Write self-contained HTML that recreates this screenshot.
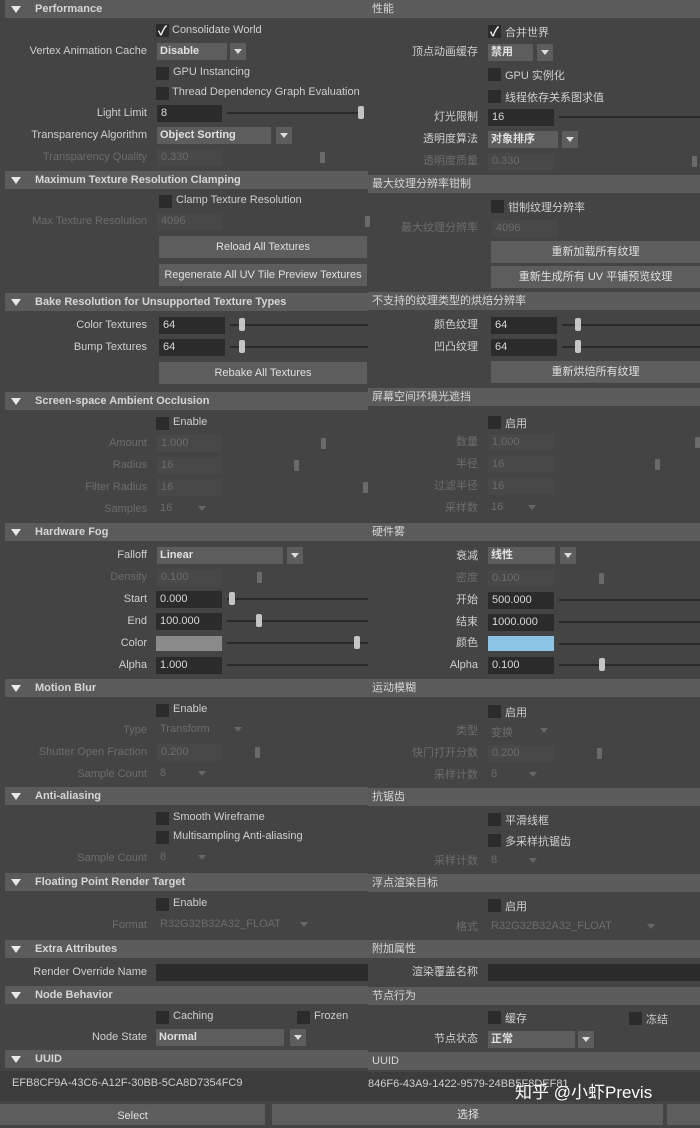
<!DOCTYPE html>
<html><head><meta charset="utf-8"><style>
*{margin:0;padding:0;box-sizing:border-box}
body{width:700px;height:1125px;background:#444;position:relative;overflow:hidden;font-family:"Liberation Sans","Noto Sans CJK SC",sans-serif;font-size:11px;color:#cfcfcf}
div,span{position:absolute;white-space:nowrap}
.h{height:18px;background:#5b5b5b;color:#d6d6d6;font-weight:bold;line-height:18px}
.hl{left:5px;width:363px;padding-left:30px}
.hr{left:368px;width:332px;padding-left:4px;font-weight:normal}
.tri{left:6px;top:6px;width:0;height:0;border-left:5px solid transparent;border-right:5px solid transparent;border-top:7px solid #e8e8e8}
.lb{text-align:right;line-height:14px}
.L{right:553px}.R{right:222px}
.d{color:#6c6c6c}
.cb{width:13px;height:13px;background:#2b2b2b}
.ck{color:#f0f0f0;font-size:13px;line-height:13px;text-align:center;font-weight:bold}
.f{height:17px;background:#2b2b2b;line-height:17px;padding-left:4px;color:#d8d8d8}
.fd{height:17px;background:#484848;line-height:17px;padding-left:4px;color:#6c6c6c}
.dd{height:17px;background:#5d5d5d;line-height:17px;padding-left:3px;color:#e0e0e0;font-weight:bold}
.ar{width:16px;height:17px;background:#5d5d5d}
.ar:after{content:"";position:absolute;left:4px;top:6px;border-left:4px solid transparent;border-right:4px solid transparent;border-top:5px solid #ddd}
.ard{width:12px;height:17px}
.ard:after{content:"";position:absolute;left:2px;top:6px;border-left:4px solid transparent;border-right:4px solid transparent;border-top:5px solid #666}
.sl{height:2px;background:#2a2a2a}
.k{width:6px;height:13px;background:#c4c4c4;border-radius:2px}
.kd{width:5px;height:11px;background:#6a6a6a;border-radius:1px}
.bt{height:22px;background:#5d5d5d;text-align:center;line-height:22px;color:#e0e0e0}
</style></head><body>

<!-- LEFT -->
<div class="h hl" style="top:0"><span class="tri"></span>Performance</div>
<div class="cb ck" style="left:156px;top:24px">✓</div><div style="left:172px;top:24px">Consolidate World</div>
<div class="lb L" style="top:44px">Vertex Animation Cache</div><div class="dd" style="left:157px;top:43px;width:70px">Disable</div><div class="ar" style="left:230px;top:43px"></div>
<div class="cb" style="left:156px;top:67px"></div><div style="left:173px;top:66px">GPU Instancing</div>
<div class="cb" style="left:156px;top:87px"></div><div style="left:172px;top:86px">Thread Dependency Graph Evaluation</div>
<div class="lb L" style="top:106px">Light Limit</div><div class="f" style="left:157px;top:105px;width:65px">8</div><div class="sl" style="left:227px;top:112px;width:137px"></div><div class="k" style="left:358px;top:106px"></div>
<div class="lb L" style="top:128px">Transparency Algorithm</div><div class="dd" style="left:157px;top:127px;width:114px">Object Sorting</div><div class="ar" style="left:276px;top:127px"></div>
<div class="lb L d" style="top:150px">Transparency Quality</div><div class="fd" style="left:157px;top:149px;width:65px">0.330</div><div class="kd" style="left:320px;top:152px"></div>
<div class="h hl" style="top:171px"><span class="tri"></span>Maximum Texture Resolution Clamping</div>
<div class="cb" style="left:159px;top:195px"></div><div style="left:176px;top:194px">Clamp Texture Resolution</div>
<div class="lb L d" style="top:214px">Max Texture Resolution</div><div class="fd" style="left:157px;top:213px;width:65px">4096</div><div class="kd" style="left:365px;top:216px"></div>
<div class="bt" style="left:159px;top:236px;width:208px">Reload All Textures</div>
<div class="bt" style="left:159px;top:264px;width:208px">Regenerate All UV Tile Preview Textures</div>
<div class="h hl" style="top:293px"><span class="tri"></span>Bake Resolution for Unsupported Texture Types</div>
<div class="lb L" style="top:318px">Color Textures</div><div class="f" style="left:159px;top:317px;width:66px">64</div><div class="sl" style="left:230px;top:324px;width:138px"></div><div class="k" style="left:239px;top:318px"></div>
<div class="lb L" style="top:340px">Bump Textures</div><div class="f" style="left:159px;top:339px;width:66px">64</div><div class="sl" style="left:230px;top:346px;width:138px"></div><div class="k" style="left:239px;top:340px"></div>
<div class="bt" style="left:159px;top:362px;width:208px">Rebake All Textures</div>
<div class="h hl" style="top:392px"><span class="tri"></span>Screen-space Ambient Occlusion</div>
<div class="cb" style="left:156px;top:417px"></div><div style="left:173px;top:416px">Enable</div>
<div class="lb L d" style="top:436px">Amount</div><div class="fd" style="left:157px;top:435px;width:65px">1.000</div><div class="kd" style="left:321px;top:438px"></div>
<div class="lb L d" style="top:458px">Radius</div><div class="fd" style="left:157px;top:457px;width:65px">16</div><div class="kd" style="left:294px;top:460px"></div>
<div class="lb L d" style="top:480px">Filter Radius</div><div class="fd" style="left:157px;top:479px;width:65px">16</div><div class="kd" style="left:363px;top:482px"></div>
<div class="lb L d" style="top:502px">Samples</div><div class="d" style="left:160px;top:502px">16</div><div class="ard" style="left:196px;top:500px"></div>
<div class="h hl" style="top:523px"><span class="tri"></span>Hardware Fog</div>
<div class="lb L" style="top:548px">Falloff</div><div class="dd" style="left:157px;top:547px;width:126px">Linear</div><div class="ar" style="left:287px;top:547px"></div>
<div class="lb L d" style="top:570px">Density</div><div class="fd" style="left:157px;top:569px;width:65px">0.100</div><div class="kd" style="left:257px;top:572px"></div>
<div class="lb L" style="top:592px">Start</div><div class="f" style="left:156px;top:591px;width:66px">0.000</div><div class="sl" style="left:227px;top:598px;width:141px"></div><div class="k" style="left:229px;top:592px"></div>
<div class="lb L" style="top:614px">End</div><div class="f" style="left:156px;top:613px;width:66px">100.000</div><div class="sl" style="left:227px;top:620px;width:141px"></div><div class="k" style="left:256px;top:614px"></div>
<div class="lb L" style="top:636px">Color</div><div style="left:156px;top:636px;width:66px;height:15px;background:#8a8a8a"></div><div class="sl" style="left:227px;top:642px;width:141px"></div><div class="k" style="left:354px;top:636px"></div>
<div class="lb L" style="top:658px">Alpha</div><div class="f" style="left:156px;top:657px;width:66px">1.000</div><div class="sl" style="left:227px;top:664px;width:141px"></div>
<div class="h hl" style="top:679px"><span class="tri"></span>Motion Blur</div>
<div class="cb" style="left:156px;top:704px"></div><div style="left:173px;top:703px">Enable</div>
<div class="lb L d" style="top:723px">Type</div><div class="d" style="left:160px;top:723px">Transform</div><div class="ard" style="left:232px;top:721px"></div>
<div class="lb L d" style="top:745px">Shutter Open Fraction</div><div class="fd" style="left:157px;top:744px;width:65px">0.200</div><div class="kd" style="left:255px;top:747px"></div>
<div class="lb L d" style="top:767px">Sample Count</div><div class="d" style="left:160px;top:767px">8</div><div class="ard" style="left:196px;top:765px"></div>
<div class="h hl" style="top:787px"><span class="tri"></span>Anti-aliasing</div>
<div class="cb" style="left:156px;top:812px"></div><div style="left:173px;top:811px">Smooth Wireframe</div>
<div class="cb" style="left:156px;top:831px"></div><div style="left:173px;top:830px">Multisampling Anti-aliasing</div>
<div class="lb L d" style="top:851px">Sample Count</div><div class="d" style="left:160px;top:851px">8</div><div class="ard" style="left:196px;top:849px"></div>
<div class="h hl" style="top:873px"><span class="tri"></span>Floating Point Render Target</div>
<div class="cb" style="left:156px;top:898px"></div><div style="left:173px;top:897px">Enable</div>
<div class="lb L d" style="top:918px">Format</div><div class="d" style="left:160px;top:918px">R32G32B32A32_FLOAT</div><div class="ard" style="left:298px;top:916px"></div>
<div class="h hl" style="top:940px"><span class="tri"></span>Extra Attributes</div>
<div class="lb L" style="top:965px">Render Override Name</div><div class="f" style="left:156px;top:964px;width:212px"></div>
<div class="h hl" style="top:986px"><span class="tri"></span>Node Behavior</div>
<div class="cb" style="left:156px;top:1011px"></div><div style="left:173px;top:1010px">Caching</div>
<div class="cb" style="left:297px;top:1011px"></div><div style="left:314px;top:1010px">Frozen</div>
<div class="lb L" style="top:1030px">Node State</div><div class="dd" style="left:156px;top:1029px;width:128px">Normal</div><div class="ar" style="left:290px;top:1029px"></div>
<div class="h hl" style="top:1050px"><span class="tri"></span>UUID</div>
<div style="left:0;top:1071px;width:368px;height:30px;background:#3c3c3c"></div>
<div style="left:12px;top:1077px">EFB8CF9A-43C6-A12F-30BB-5CA8D7354FC9</div>
<div class="bt" style="left:0;top:1104px;width:265px;height:21px;line-height:24px">Select</div>
<div class="bt" style="left:272px;top:1104px;width:96px;height:21px"></div>

<!-- RIGHT -->
<div class="h hr" style="top:0">性能</div>
<div class="cb ck" style="left:488px;top:25px">✓</div><div style="left:505px;top:24px">合并世界</div>
<div class="lb R" style="top:45px">顶点动画缓存</div><div class="dd" style="left:488px;top:44px;width:45px">禁用</div><div class="ar" style="left:537px;top:44px"></div>
<div class="cb" style="left:488px;top:68px"></div><div style="left:505px;top:67px">GPU 实例化</div>
<div class="cb" style="left:488px;top:90px"></div><div style="left:505px;top:89px">线程依存关系图求值</div>
<div class="lb R" style="top:110px">灯光限制</div><div class="f" style="left:488px;top:109px;width:66px">16</div><div class="sl" style="left:559px;top:116px;width:141px"></div>
<div class="lb R" style="top:132px">透明度算法</div><div class="dd" style="left:488px;top:131px;width:70px">对象排序</div><div class="ar" style="left:562px;top:131px"></div>
<div class="lb R d" style="top:154px">透明度质量</div><div class="fd" style="left:488px;top:153px;width:66px">0.330</div><div class="kd" style="left:692px;top:156px"></div>
<div class="h hr" style="top:175px">最大纹理分辨率钳制</div>
<div class="cb" style="left:491px;top:200px"></div><div style="left:508px;top:199px">钳制纹理分辨率</div>
<div class="lb R d" style="top:221px">最大纹理分辨率</div><div class="fd" style="left:492px;top:220px;width:66px">4096</div>
<div class="bt" style="left:491px;top:241px;width:209px">重新加载所有纹理</div>
<div class="bt" style="left:491px;top:266px;width:209px">重新生成所有 UV 平铺预览纹理</div>
<div class="h hr" style="top:292px">不支持的纹理类型的烘焙分辨率</div>
<div class="lb R" style="top:318px">颜色纹理</div><div class="f" style="left:491px;top:317px;width:66px">64</div><div class="sl" style="left:562px;top:324px;width:138px"></div><div class="k" style="left:575px;top:318px"></div>
<div class="lb R" style="top:340px">凹凸纹理</div><div class="f" style="left:491px;top:339px;width:66px">64</div><div class="sl" style="left:562px;top:346px;width:138px"></div><div class="k" style="left:575px;top:340px"></div>
<div class="bt" style="left:491px;top:361px;width:209px">重新烘焙所有纹理</div>
<div class="h hr" style="top:388px">屏幕空间环境光遮挡</div>
<div class="cb" style="left:488px;top:416px"></div><div style="left:505px;top:415px">启用</div>
<div class="lb R d" style="top:435px">数量</div><div class="fd" style="left:488px;top:434px;width:66px">1.000</div><div class="kd" style="left:695px;top:437px"></div>
<div class="lb R d" style="top:457px">半径</div><div class="fd" style="left:488px;top:456px;width:66px">16</div><div class="kd" style="left:655px;top:459px"></div>
<div class="lb R d" style="top:479px">过滤半径</div><div class="fd" style="left:488px;top:478px;width:66px">16</div>
<div class="lb R d" style="top:501px">采样数</div><div class="d" style="left:491px;top:501px">16</div><div class="ard" style="left:526px;top:499px"></div>
<div class="h hr" style="top:523px">硬件雾</div>
<div class="lb R" style="top:549px">衰减</div><div class="dd" style="left:488px;top:547px;width:67px">线性</div><div class="ar" style="left:560px;top:547px"></div>
<div class="lb R d" style="top:571px">密度</div><div class="fd" style="left:488px;top:570px;width:66px">0.100</div><div class="kd" style="left:599px;top:573px"></div>
<div class="lb R" style="top:593px">开始</div><div class="f" style="left:488px;top:592px;width:66px">500.000</div><div class="sl" style="left:559px;top:599px;width:141px"></div>
<div class="lb R" style="top:615px">结束</div><div class="f" style="left:488px;top:614px;width:66px">1000.000</div><div class="sl" style="left:559px;top:621px;width:141px"></div>
<div class="lb R" style="top:636px">颜色</div><div style="left:488px;top:636px;width:66px;height:15px;background:#8cc4e6"></div><div class="sl" style="left:559px;top:643px;width:141px"></div>
<div class="lb R" style="top:658px">Alpha</div><div class="f" style="left:488px;top:657px;width:66px">0.100</div><div class="sl" style="left:559px;top:664px;width:141px"></div><div class="k" style="left:599px;top:658px"></div>
<div class="h hr" style="top:679px">运动模糊</div>
<div class="cb" style="left:488px;top:705px"></div><div style="left:505px;top:704px">启用</div>
<div class="lb R d" style="top:724px">类型</div><div class="d" style="left:491px;top:724px">变换</div><div class="ard" style="left:538px;top:722px"></div>
<div class="lb R d" style="top:746px">快门打开分数</div><div class="fd" style="left:488px;top:745px;width:66px">0.200</div><div class="kd" style="left:597px;top:748px"></div>
<div class="lb R d" style="top:768px">采样计数</div><div class="d" style="left:491px;top:768px">8</div><div class="ard" style="left:527px;top:766px"></div>
<div class="h hr" style="top:788px">抗锯齿</div>
<div class="cb" style="left:488px;top:813px"></div><div style="left:505px;top:812px">平滑线框</div>
<div class="cb" style="left:488px;top:834px"></div><div style="left:505px;top:833px">多采样抗锯齿</div>
<div class="lb R d" style="top:854px">采样计数</div><div class="d" style="left:491px;top:854px">8</div><div class="ard" style="left:527px;top:852px"></div>
<div class="h hr" style="top:874px">浮点渲染目标</div>
<div class="cb" style="left:488px;top:899px"></div><div style="left:505px;top:898px">启用</div>
<div class="lb R d" style="top:920px">格式</div><div class="d" style="left:491px;top:920px">R32G32B32A32_FLOAT</div><div class="ard" style="left:645px;top:918px"></div>
<div class="h hr" style="top:940px">附加属性</div>
<div class="lb R" style="top:965px">渲染覆盖名称</div><div class="f" style="left:488px;top:964px;width:212px"></div>
<div class="h hr" style="top:987px">节点行为</div>
<div class="cb" style="left:488px;top:1011px"></div><div style="left:505px;top:1010px">缓存</div>
<div class="cb" style="left:629px;top:1012px"></div><div style="left:646px;top:1011px">冻结</div>
<div class="lb R" style="top:1032px">节点状态</div><div class="dd" style="left:488px;top:1031px;width:87px">正常</div><div class="ar" style="left:578px;top:1031px"></div>
<div class="h hr" style="top:1052px">UUID</div>
<div style="left:368px;top:1072px;width:332px;height:29px;background:#3c3c3c"></div>
<div style="left:368px;top:1078px">846F6-43A9-1422-9579-24BB5F8DEF81</div>
<div style="left:515px;top:1078px;font-size:17px;color:#fff">知乎 @小虾Previs</div>
<div class="bt" style="left:273px;top:1104px;width:390px;height:21px">选择</div>
<div class="bt" style="left:667px;top:1104px;width:33px;height:21px"></div>
</body></html>
